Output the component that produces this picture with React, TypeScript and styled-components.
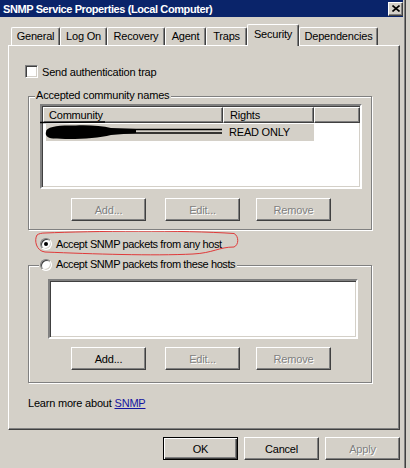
import React from 'react';
import styled, { createGlobalStyle, css } from 'styled-components';

const GlobalStyle = createGlobalStyle`
  html, body {
    margin: 0;
    padding: 0;
    background: #d4d0c8;
  }
  body {
    font-family: 'Liberation Sans', Arial, sans-serif;
    font-size: 11px;
    letter-spacing: -0.2px;
    color: #000;
  }
  * {
    box-sizing: border-box;
  }
`;

const Window = styled.div`
  width: 406px;
  height: 468px;
  background: #d4d0c8;
  border-right: 1px solid #404040;
  box-shadow: inset -1px 0 #808080;
  display: flex;
  flex-direction: column;
`;

const TitleBar = styled.div`
  height: 17px;
  margin-right: 2px;
  background: #0a246a;
  color: #fff;
  font-weight: bold;
  letter-spacing: -0.4px;
  display: flex;
  align-items: center;
  padding-left: 3px;
`;

const CloseButton = styled.div`
  width: 15px;
  height: 14px;
  margin-left: auto;
  background: #d4d0c8;
  border: 1px solid;
  border-color: #fff #404040 #404040 #fff;
  box-shadow: inset -1px -1px #808080;
  display: flex;
  align-items: center;
  justify-content: center;
`;

const TabStrip = styled.div`
  display: flex;
  align-items: flex-end;
  height: 21px;
  margin-top: 7px;
  padding-left: 11px;
  position: relative;
  z-index: 1;
`;

const Tab = styled.div<{ $w: number; $active?: boolean }>`
  width: ${p => p.$w}px;
  height: 18px;
  border-top: 1px solid #fff;
  border-left: 1px solid #fff;
  border-right: 1px solid #404040;
  border-radius: 2px 2px 0 0;
  box-shadow: inset -1px 0 #808080;
  background: #d4d0c8;
  display: flex;
  align-items: center;
  justify-content: center;
  padding-bottom: 1px;
  ${p =>
    p.$active &&
    css`
      height: 22px;
      margin-bottom: -1px;
      padding-bottom: 3px;
    `}
`;

const Panel = styled.div`
  margin-left: 8px;
  width: 392px;
  height: 385px;
  border-left: 1px solid #fff;
  border-top: 1px solid #fff;
  border-right: 1px solid #404040;
  border-bottom: 1px solid #404040;
  box-shadow: inset -1px -1px #808080;
  padding: 19px 0 0 19px;
  display: flex;
  flex-direction: column;
`;

const CheckRow = styled.label`
  display: flex;
  align-items: center;
  gap: 4px;
  height: 13px;
  margin-left: -3px;
`;

const CheckBox = styled.span`
  width: 13px;
  height: 13px;
  background: #fff;
  border: 1px solid;
  border-color: #808080 #fff #fff #808080;
  box-shadow: inset 1px 1px #404040, inset -1px -1px #d4d0c8;
`;

const GroupBox = styled.div<{ $mt: number; $pb: number }>`
  width: 344px;
  margin-top: ${p => p.$mt}px;
  border: 1px solid #808080;
  box-shadow: inset 1px 1px #fff, 1px 1px 0 #fff;
  padding-bottom: ${p => p.$pb}px;
  display: flex;
  flex-direction: column;
`;

const Legend = styled.div<{ $ml: number }>`
  align-self: flex-start;
  display: flex;
  align-items: center;
  gap: 4px;
  height: 13px;
  line-height: 13px;
  margin: -8px 0 0 ${p => p.$ml}px;
  padding: 0 2px 0 1px;
  background: #d4d0c8;
`;

const Sunken = css`
  background: #fff;
  border: 2px solid;
  border-color: #808080 #fff #fff #808080;
  box-shadow: inset 1px 1px #404040, inset -1px -1px #d4d0c8;
`;

const ListView = styled.div`
  ${Sunken};
  position: relative;
  width: 322px;
  height: 85px;
  margin: 2px 0 0 11px;
  padding: 1px 0 0 1px;
`;

const HeaderRow = styled.div`
  display: flex;
  height: 16px;
`;

const HeaderCell = styled.div<{ $w?: number; $pl: number }>`
  ${p => (p.$w ? `width: ${p.$w}px;` : 'flex: 1;')}
  height: 16px;
  line-height: 14px;
  padding-left: ${p => p.$pl}px;
  background: #d4d0c8;
  border-top: 1px solid #fff;
  border-left: 1px solid #fff;
  border-right: 1px solid #404040;
  border-bottom: 1px solid #404040;
  box-shadow: inset -1px -1px #808080;
`;

const Row = styled.div`
  display: flex;
  width: 268px;
  height: 17px;
  margin: 1px 0 0 3px;
  background: #d4d0c8;
  line-height: 17px;
`;

const Cell = styled.div<{ $w?: number; $pl: number }>`
  ${p => (p.$w ? `width: ${p.$w}px;` : 'flex: 1;')}
  padding-left: ${p => p.$pl}px;
`;

const Scribble = styled.svg`
  position: absolute;
  left: -2px;
  top: -2px;
`;

const ButtonRow = styled.div<{ $mt: number }>`
  display: flex;
  margin: ${p => p.$mt}px 0 0 42px;
  gap: 19px;
  & > :last-child {
    margin-left: -3px;
  }
`;

const Button = styled.div<{ $disabled?: boolean; $default?: boolean }>`
  width: 75px;
  height: 23px;
  background: #d4d0c8;
  border: 1px solid;
  border-color: #fff #404040 #404040 #fff;
  box-shadow: inset -1px -1px #808080;
  display: flex;
  align-items: center;
  justify-content: center;
  ${p =>
    p.$disabled &&
    css`
      color: #808080;
      text-shadow: 1px 1px 0 #fff;
    `}
  ${p =>
    p.$default &&
    css`
      border-color: #000;
      box-shadow: inset 1px 1px #fff, inset -1px -1px #404040, inset -2px -2px #808080;
    `}
`;

const RadioRow = styled.label<{ $mt?: number; $ml?: number }>`
  position: relative;
  display: flex;
  align-items: center;
  gap: 4px;
  height: 13px;
  margin: ${p => p.$mt ?? 0}px 0 0 ${p => p.$ml ?? 0}px;
`;

const RadioText = styled.span`
  letter-spacing: -0.4px;
`;

const Radio = styled.span<{ $checked?: boolean }>`
  width: 12px;
  height: 12px;
  border-radius: 50%;
  background: #fff;
  border: 1px solid;
  border-color: #808080 #fff #fff #808080;
  box-shadow: inset 1px 1px #404040, inset -1px -1px #d4d0c8;
  display: flex;
  align-items: center;
  justify-content: center;
  &::after {
    content: '';
    width: 4px;
    height: 4px;
    border-radius: 50%;
    background: ${p => (p.$checked ? '#000' : 'transparent')};
  }
`;

const Annotation = styled.svg`
  position: absolute;
  left: -7px;
  top: -6px;
  pointer-events: none;
`;

const HostList = styled.div`
  ${Sunken};
  width: 310px;
  height: 60px;
  margin: 8px 0 0 19px;
`;

const LearnMore = styled.div`
  margin-top: 14px;
  line-height: 13px;
`;

const Link = styled.a`
  color: #1515a0;
  text-decoration: underline;
`;

const Footer = styled.div`
  display: flex;
  justify-content: flex-end;
  gap: 6px;
  margin-top: 7px;
  width: 400px;
`;

const tabs = [
  { label: 'General', w: 49 },
  { label: 'Log On', w: 47 },
  { label: 'Recovery', w: 58 },
  { label: 'Agent', w: 41 },
  { label: 'Traps', w: 41 },
  { label: 'Security', w: 52, active: true },
  { label: 'Dependencies', w: 79 },
];

export default function App() {
  return (
    <>
      <GlobalStyle />
      <Window>
        <TitleBar>
          SNMP Service Properties (Local Computer)
          <CloseButton>
            <svg width="8" height="7" viewBox="0 0 8 7">
              <path d="M0.5 0.5 L7.5 6.5 M7.5 0.5 L0.5 6.5" stroke="#000" strokeWidth="1.6" />
            </svg>
          </CloseButton>
        </TitleBar>

        <TabStrip>
          {tabs.map(t => (
            <Tab key={t.label} $w={t.w} $active={t.active}>
              {t.label}
            </Tab>
          ))}
        </TabStrip>

        <Panel>
          <CheckRow>
            <CheckBox />
            Send authentication trap
          </CheckRow>

          <GroupBox $mt={18} $pb={8}>
            <Legend $ml={6}>Accepted community names</Legend>
            <ListView>
              <HeaderRow>
                <HeaderCell $w={180} $pl={5}>Community</HeaderCell>
                <HeaderCell $w={91} $pl={6}>Rights</HeaderCell>
                <HeaderCell $pl={0} />
              </HeaderRow>
              <Row>
                <Cell $w={177} $pl={0} />
                <Cell $pl={6}>READ ONLY</Cell>
              </Row>
              <Scribble width="190" height="40" viewBox="0 0 190 40">
                <path d="M0 18.5 L65 18" stroke="#000" strokeWidth="1.5" />
                <path
                  d="M6 28 C6 22 20 21 36 21.5 C50 21 62 22 71 24 L96 25 L96 29 L71 31 C56 35 31 35.5 13 34.5 C7 34 5 31 6 28 Z"
                  fill="#000"
                />
                <path d="M70 25.5 L182 25.5 M70 29 L182 29" stroke="#000" strokeWidth="1.6" />
              </Scribble>
            </ListView>
            <ButtonRow $mt={9}>
              <Button $disabled>Add...</Button>
              <Button $disabled>Edit...</Button>
              <Button $disabled>Remove</Button>
            </ButtonRow>
          </GroupBox>

          <RadioRow $mt={7} $ml={12}>
            <Radio $checked />
            <RadioText>Accept SNMP packets from any host</RadioText>
            <Annotation width="210" height="28" viewBox="0 0 210 28">
              <path
                d="M12 2 C60 0 150 -1 201 2.5 C206 5 206 14 201 16 C186 16 180 22 160 23 C120 25 60 23 12 21 C3 20 1 9 4 4 C6 2.5 9 2 12 2 Z"
                fill="none"
                stroke="#e03a3a"
                strokeWidth="1"
              />
            </Annotation>
          </RadioRow>

          <GroupBox $mt={15} $pb={12}>
            <Legend $ml={10}>
              <Radio />
              <RadioText>Accept SNMP packets from these hosts</RadioText>
            </Legend>
            <HostList />
            <ButtonRow $mt={8}>
              <Button>Add...</Button>
              <Button $disabled>Edit...</Button>
              <Button $disabled>Remove</Button>
            </ButtonRow>
          </GroupBox>

          <LearnMore>
            Learn more about <Link>SNMP</Link>
          </LearnMore>
        </Panel>

        <Footer>
          <Button $default>OK</Button>
          <Button>Cancel</Button>
          <Button $disabled>Apply</Button>
        </Footer>
      </Window>
    </>
  );
}
